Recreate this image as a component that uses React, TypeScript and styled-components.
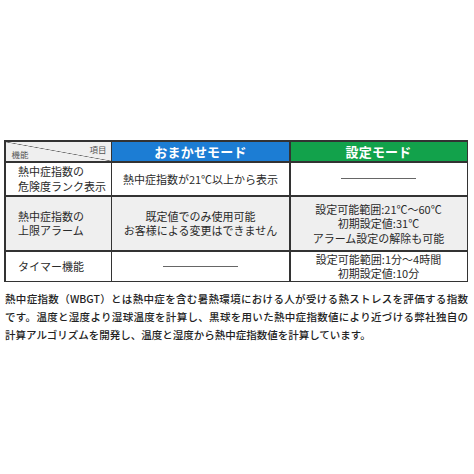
import React from "react";
import styled, { createGlobalStyle } from "styled-components";

const Global = createGlobalStyle`
  html, body { margin: 0; padding: 0; background: #fff; }
  body { font-family: "Noto Sans CJK JP", "Noto Sans", sans-serif; color: #222; }
`;

const Page = styled.div`
  width: 474px;
  height: 474px;
  padding: 140px 6px 0 4px;
  box-sizing: border-box;
`;

const Table = styled.div`
  display: grid;
  grid-template-columns: 105px 177px 176px;
  grid-template-rows: 19.5px 32.5px 53.5px 29px;
  gap: 1.5px;
  padding: 1.5px;
  background: #333;
  width: 464px;
  box-sizing: border-box;
`;

const CornerCell = styled.div`
  background: #efefef linear-gradient(
    to top right,
    transparent calc(50% - 0.6px),
    #666 50%,
    transparent calc(50% + 0.6px)
  );
  display: flex;
  justify-content: space-between;
  padding: 2px 4px 1px 6px;
  font-size: 8.5px;
  color: #555;
`;

const CornerLabel = styled.span<{ $pos: "top" | "bottom" }>`
  align-self: ${(p) => (p.$pos === "top" ? "flex-start" : "flex-end")};
  line-height: 11px;
`;

const HeadCell = styled.div<{ $color: string }>`
  background: ${(p) => p.$color};
  color: #fff;
  font-weight: 700;
  font-size: 13px;
  display: flex;
  align-items: center;
  justify-content: center;
  letter-spacing: 0.2px;
`;

const Cell = styled.div<{ $gray?: boolean; $left?: boolean }>`
  background: ${(p) => (p.$gray ? "#efefef" : "#fff")};
  display: flex;
  flex-direction: column;
  justify-content: center;
  align-items: ${(p) => (p.$left ? "flex-start" : "center")};
  padding-left: ${(p) => (p.$left ? "12.5px" : "0")};
  font-size: 11px;
  line-height: 14.5px;
  text-align: ${(p) => (p.$left ? "left" : "center")};
  white-space: nowrap;
  color: #2a2a2a;
`;

const Dash = styled.span`
  display: block;
  width: 75px;
  height: 1px;
  background: #666;
`;

const Para = styled.div`
  margin-top: 8px;
  width: 464px;
  font-size: 10.5px;
  font-weight: 500;
  line-height: 18px;
  color: #222;
`;

const Line = styled.div<{ $full?: boolean }>`
  text-align: ${(p) => (p.$full ? "justify" : "left")};
  text-align-last: ${(p) => (p.$full ? "justify" : "left")};
  white-space: nowrap;
  padding-left: 1px;
`;

export default function App() {
  return (
    <>
      <Global />
      <Page>
        <Table>
          <CornerCell>
            <CornerLabel $pos="bottom">機能</CornerLabel>
            <CornerLabel $pos="top">項目</CornerLabel>
          </CornerCell>
          <HeadCell $color="#1c7dd4">おまかせモード</HeadCell>
          <HeadCell $color="#12a24b">設定モード</HeadCell>

          <Cell $left>
            <span>熱中症指数の</span>
            <span>危険度ランク表示</span>
          </Cell>
          <Cell>
            <span>熱中症指数が21℃以上から表示</span>
          </Cell>
          <Cell>
            <Dash />
          </Cell>

          <Cell $left $gray>
            <span>熱中症指数の</span>
            <span>上限アラーム</span>
          </Cell>
          <Cell $gray>
            <span>既定値でのみ使用可能</span>
            <span>お客様による変更はできません</span>
          </Cell>
          <Cell $gray>
            <span>設定可能範囲:21℃〜60℃</span>
            <span>初期設定値:31℃</span>
            <span>アラーム設定の解除も可能</span>
          </Cell>

          <Cell $left>
            <span>タイマー機能</span>
          </Cell>
          <Cell>
            <Dash />
          </Cell>
          <Cell>
            <span>設定可能範囲:1分〜4時間</span>
            <span>初期設定値:10分</span>
          </Cell>
        </Table>
        <Para>
          <Line $full>熱中症指数（WBGT）とは熱中症を含む暑熱環境における人が受ける熱ストレスを評価する指数</Line>
          <Line $full>です。温度と湿度より湿球温度を計算し、黒球を用いた熱中症指数値により近づける弊社独自の</Line>
          <Line>計算アルゴリズムを開発し、温度と湿度から熱中症指数値を計算しています。</Line>
        </Para>
      </Page>
    </>
  );
}
